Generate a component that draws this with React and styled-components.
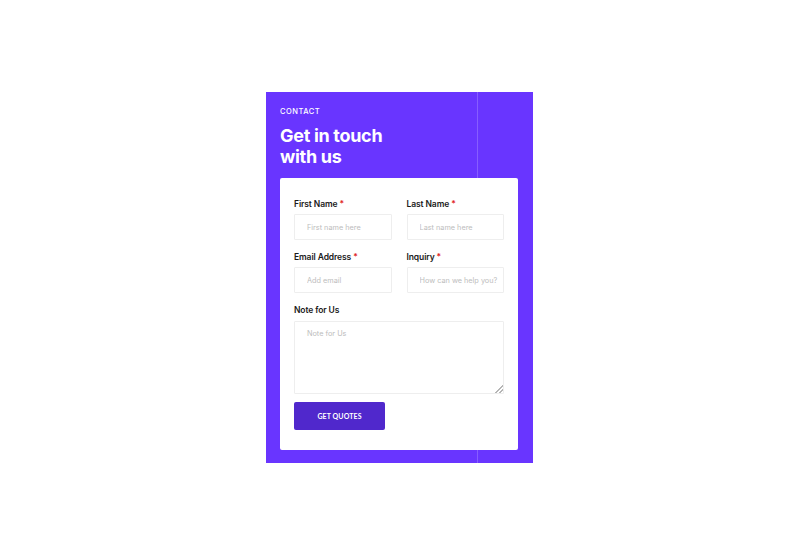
import React from "react";
import styled, { createGlobalStyle } from "styled-components";

const GlobalStyle = createGlobalStyle`
  html, body {
    margin: 0;
    padding: 0;
    background: #ffffff;
  }
  body {
    font-family: "Inter", "Noto Sans", sans-serif;
  }
`;

const fields = [
  [
    { label: "First Name", placeholder: "First name here", required: true },
    { label: "Last Name", placeholder: "Last name here", required: true },
  ],
  [
    { label: "Email Address", placeholder: "Add email", required: true },
    { label: "Inquiry", placeholder: "How can we help you?", required: true },
  ],
];

const App = () => {
  return (
    <>
      <GlobalStyle />
      <Page>
        <Panel>
          <Eyebrow>CONTACT</Eyebrow>
          <Heading>
            Get in touch
            <br />
            with us
          </Heading>
          <Card>
            {fields.map((row, i) => (
              <Row key={i}>
                {row.map((f) => (
                  <Field key={f.label}>
                    <Label>
                      {f.label}
                      {f.required && <Star>*</Star>}
                    </Label>
                    <Input type="text" placeholder={f.placeholder} />
                  </Field>
                ))}
              </Row>
            ))}
            <Field>
              <Label>Note for Us</Label>
              <TextArea placeholder="Note for Us" />
            </Field>
            <SubmitButton type="button">GET QUOTES</SubmitButton>
          </Card>
        </Panel>
      </Page>
    </>
  );
};

export default App;

const Page = styled.div`
  width: 800px;
  height: 556px;
  display: flex;
  padding: 92px 0 0 266px;
  box-sizing: border-box;
`;

const Panel = styled.section`
  position: relative;
  width: 267px;
  height: 371px;
  box-sizing: border-box;
  background: #6935ff;
  padding: 15px 15px 14px 14px;
  display: flex;
  flex-direction: column;

  &::before {
    content: "";
    position: absolute;
    top: 0;
    bottom: 0;
    left: 211px;
    width: 1px;
    background: rgba(255, 255, 255, 0.2);
  }
`;

const Eyebrow = styled.div`
  position: relative;
  font-family: "Inter", sans-serif;
  font-size: 7.5px;
  font-weight: 500;
  letter-spacing: 0.5px;
  color: #ffffff;
  line-height: 10px;
`;

const Heading = styled.h2`
  position: relative;
  margin: 8px 0 0;
  font-family: "Inter", sans-serif;
  font-size: 18px;
  font-weight: 700;
  letter-spacing: -0.3px;
  line-height: 21px;
  color: #ffffff;
`;

const Card = styled.div`
  position: relative;
  margin-top: 11px;
  flex: 1;
  background: #ffffff;
  border-radius: 2px;
  padding: 20px 14px 20px 14px;
  display: flex;
  flex-direction: column;
  gap: 11px;
`;

const Row = styled.div`
  display: grid;
  grid-template-columns: 1fr 1fr;
  column-gap: 15px;
`;

const Field = styled.div`
  display: flex;
  flex-direction: column;
  gap: 4px;
`;

const Label = styled.label`
  font-family: "Inter", sans-serif;
  font-size: 8.5px;
  font-weight: 600;
  line-height: 12px;
  color: #1a1a1a;
  letter-spacing: -0.1px;
`;

const Star = styled.span`
  color: #e02424;
  margin-left: 2px;
`;

const Input = styled.input`
  box-sizing: border-box;
  width: 100%;
  height: 26px;
  border: 1px solid #eeeeee;
  border-radius: 1px;
  padding: 0 2px 0 12px;
  font-family: "Inter", sans-serif;
  font-size: 7.3px;
  color: #333;
  outline: none;

  &::placeholder {
    color: #bdbdbd;
  }
`;

const TextArea = styled.textarea`
  box-sizing: border-box;
  width: 100%;
  height: 73px;
  border: 1px solid #eeeeee;
  border-radius: 1px;
  padding: 7px 12px;
  font-family: "Inter", sans-serif;
  font-size: 7.3px;
  color: #333;
  outline: none;
  resize: vertical;
  margin-top: 1px;

  &::placeholder {
    color: #bdbdbd;
  }

  &::-webkit-resizer {
    background: linear-gradient(
      135deg,
      transparent 72%,
      #b5b5b5 72%,
      #b5b5b5 78%,
      transparent 78%,
      transparent 84%,
      #b5b5b5 84%,
      #b5b5b5 90%,
      transparent 90%
    );
  }
`;

const SubmitButton = styled.button`
  margin-top: -3px;
  width: 91px;
  height: 28px;
  border: none;
  border-radius: 2px;
  background: #5028cc;
  color: #ffffff;
  font-family: "Lato", sans-serif;
  font-size: 7px;
  font-weight: 700;
  letter-spacing: 0.1px;
  cursor: pointer;
`;
